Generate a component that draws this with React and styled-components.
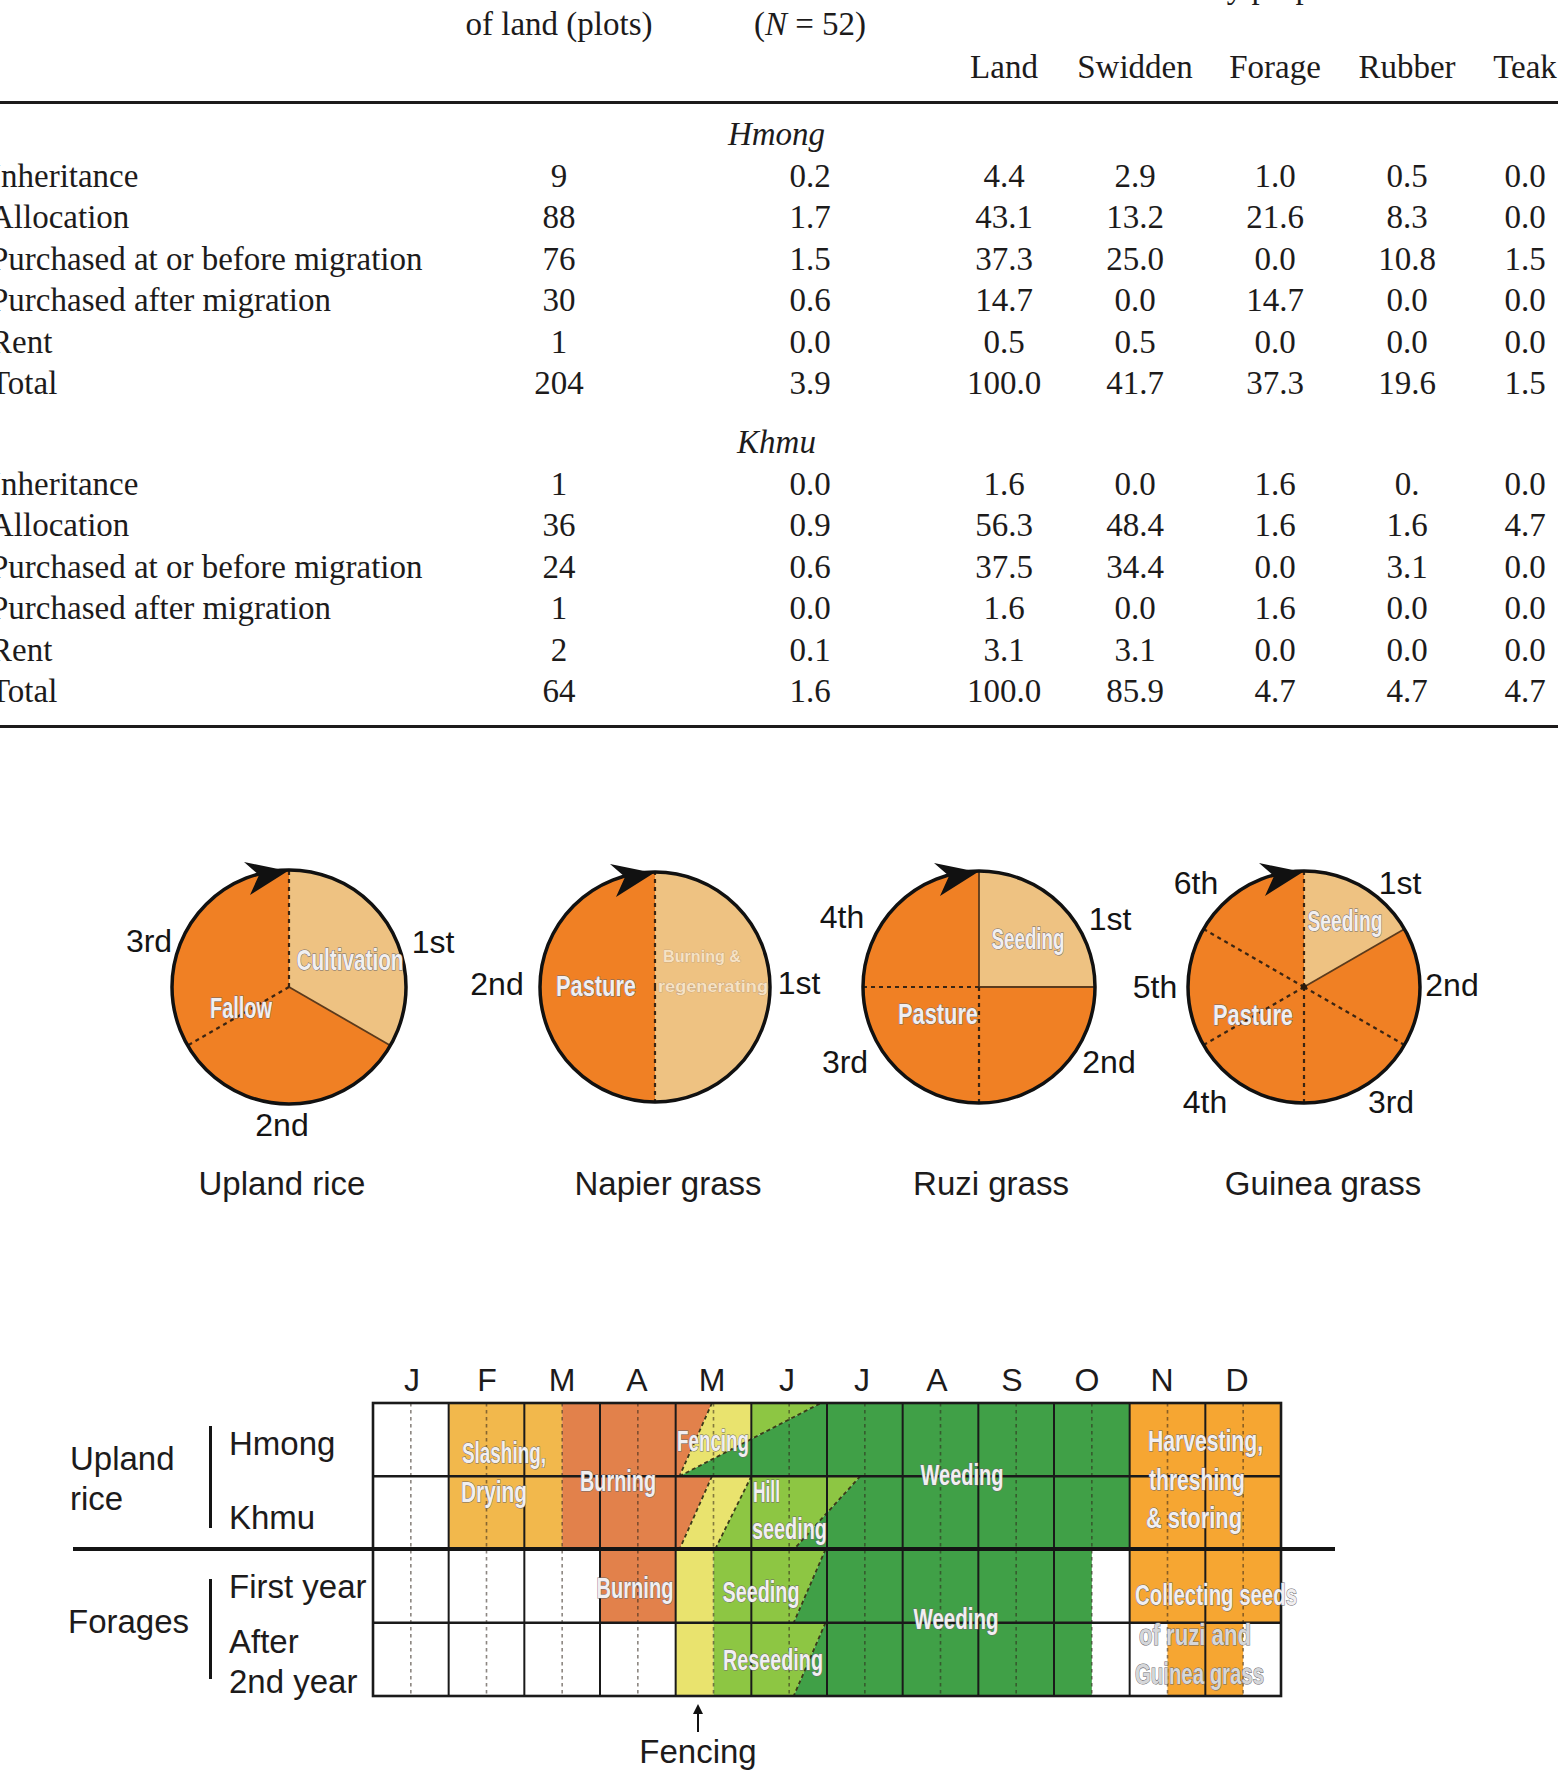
import React from "react";
import styled, { createGlobalStyle } from "styled-components";

const GlobalStyle = createGlobalStyle`
  html, body { margin: 0; padding: 0; background: #ffffff; }
  body { overflow: hidden; }
`;

const Page = styled.div`
  width: 1567px;
  height: 1773px;
  overflow: hidden;
  background: #ffffff;
  color: #1d1b1b;
  display: flex;
  flex-direction: column;
`;

/* ---------------- Table ---------------- */
const COLS = "469px 200px 302px 86px 176px 104px 160px 76px";

const Table = styled.section`
  font-family: "Liberation Serif", "Times New Roman", serif;
  font-size: 33px;
  line-height: 1.15;
  width: 1558px;
  display: flex;
  flex-direction: column;
`;

const ClippedHeading = styled.div`
  height: 41px;
  line-height: 41px;
  margin-top: -33.5px;
  margin-bottom: -4px;
  padding-left: 1071px;
  white-space: nowrap;
`;

const Row = styled.div`
  display: grid;
  grid-template-columns: ${COLS};
  margin-left: -10px;
  margin-top: ${(p) => p.$mt || 0}px;
  height: ${(p) => p.$h}px;
  align-items: center;
  white-space: nowrap;
`;

const Cell = styled.div`
  text-align: center;
`;

const LabelCell = styled.div`
  text-align: left;
`;

const GroupTitle = styled.div`
  grid-column: 1 / -1;
  text-align: center;
  font-style: italic;
`;

const Rule = styled.div`
  height: 3px;
  background: #1d1b1b;
  margin-top: ${(p) => p.$mt}px;
`;

const hmong = [
  ["Inheritance", "9", "0.2", "4.4", "2.9", "1.0", "0.5", "0.0"],
  ["Allocation", "88", "1.7", "43.1", "13.2", "21.6", "8.3", "0.0"],
  ["Purchased at or before migration", "76", "1.5", "37.3", "25.0", "0.0", "10.8", "1.5"],
  ["Purchased after migration", "30", "0.6", "14.7", "0.0", "14.7", "0.0", "0.0"],
  ["Rent", "1", "0.0", "0.5", "0.5", "0.0", "0.0", "0.0"],
  ["Total", "204", "3.9", "100.0", "41.7", "37.3", "19.6", "1.5"],
];

const khmu = [
  ["Inheritance", "1", "0.0", "1.6", "0.0", "1.6", "0.", "0.0"],
  ["Allocation", "36", "0.9", "56.3", "48.4", "1.6", "1.6", "4.7"],
  ["Purchased at or before migration", "24", "0.6", "37.5", "34.4", "0.0", "3.1", "0.0"],
  ["Purchased after migration", "1", "0.0", "1.6", "0.0", "1.6", "0.0", "0.0"],
  ["Rent", "2", "0.1", "3.1", "3.1", "0.0", "0.0", "0.0"],
  ["Total", "64", "1.6", "100.0", "85.9", "4.7", "4.7", "4.7"],
];

const DataRows = ({ rows }) =>
  rows.map((r) => (
    <Row key={r[0]} $h={41.5}>
      <LabelCell>{r[0]}</LabelCell>
      {r.slice(1).map((v, i) => (
        <Cell key={i}>{v}</Cell>
      ))}
    </Row>
  ));

/* ---------------- Pies ---------------- */
const PieRow = styled.section`
  display: flex;
  margin-top: 122px;
  padding-left: 110px;
`;

const PieFigure = styled.figure`
  margin: 0;
  width: ${(p) => p.$w}px;
  display: flex;
  flex-direction: column;
`;

const PieSvg = styled.svg`
  display: block;
  overflow: visible;
`;

const PieCaption = styled.figcaption`
  margin-top: 14px;
  font-family: "Liberation Sans", Arial, sans-serif;
  font-size: 33px;
  line-height: 40px;
  text-align: center;
  white-space: nowrap;
  padding-left: ${(p) => (p.$shift > 0 ? p.$shift * 2 : 0)}px;
  padding-right: ${(p) => (p.$shift < 0 ? -p.$shift * 2 : 0)}px;
`;

const OrdinalText = styled.text`
  font-family: "Liberation Sans", Arial, sans-serif;
  font-size: 32px;
  fill: #141414;
`;

const StageText = styled.text`
  font-family: "Liberation Sans", Arial, sans-serif;
  font-weight: 700;
  font-size: ${(p) => p.$size || 30}px;
  fill: ${(p) => (p.$faint ? "#f6e2c4" : p.$muted ? "#d5d7da" : "#f1eff1")};
  stroke: ${(p) => (p.$faint ? "#b0927a" : "#6b676b")};
  stroke-width: ${(p) => (p.$faint ? 0.6 : 1.1)}px;
  paint-order: stroke;
`;

const ORANGE = "#F08024";
const TAN = "#EEC282";

const polar = (cx, cy, r, deg) => {
  const a = ((deg - 90) * Math.PI) / 180;
  return [cx + r * Math.cos(a), cy + r * Math.sin(a)];
};

const sectorPath = (cx, cy, r, a0, a1) => {
  const [x0, y0] = polar(cx, cy, r, a0);
  const [x1, y1] = polar(cx, cy, r, a1);
  const large = a1 - a0 > 180 ? 1 : 0;
  return `M${cx},${cy} L${x0},${y0} A${r},${r} 0 ${large} 1 ${x1},${y1} Z`;
};

const pies = [
  {
    w: 360, cx: 179, cy: 137, r: 117, tan: [0, 120], dashed: [0, 240], solid: [120],
    caption: "Upland rice", shift: -8,
    labels: [["3rd", 39, 91], ["1st", 323, 92], ["2nd", 172, 275]],
    texts: [
      { t: "Cultivation", x: 240, y: 109, w: 107 },
      { t: "Fallow", x: 131, y: 157, w: 62 },
    ],
  },
  {
    w: 350, cx: 185, cy: 137, r: 115, tan: [0, 180], dashed: [0, 180], solid: [],
    caption: "Napier grass", shift: 23,
    labels: [["2nd", 27, 134], ["1st", 329, 133]],
    texts: [
      { t: "Pasture", x: 126, y: 135, w: 80 },
      { t: "Burning &", x: 232, y: 106, w: 78, size: 17, faint: true },
      { t: "regenerating", x: 243, y: 136, w: 110, size: 17, faint: true },
    ],
  },
  {
    w: 310, cx: 159, cy: 137, r: 116, tan: [0, 90], dashed: [180, 270], solid: [0, 90],
    caption: "Ruzi grass", shift: 16,
    labels: [["4th", 22, 67], ["1st", 290, 69], ["3rd", 25, 212], ["2nd", 289, 212]],
    texts: [
      { t: "Seeding", x: 208, y: 88, w: 73 },
      { t: "Pasture", x: 118, y: 163, w: 80 },
    ],
  },
  {
    w: 360, cx: 174, cy: 137, r: 116, tan: [0, 60], dashed: [0, 120, 180, 240, 300], solid: [60],
    caption: "Guinea grass", shift: 13, dot: true,
    labels: [
      ["6th", 66, 33], ["1st", 270, 33], ["2nd", 322, 135],
      ["3rd", 261, 252], ["4th", 75, 252], ["5th", 25, 137],
    ],
    texts: [
      { t: "Seeding", x: 215, y: 70, w: 75 },
      { t: "Pasture", x: 123, y: 164, w: 80 },
    ],
  },
];

const Pie = ({ p }) => {
  const { cx, cy, r } = p;
  const tx = cx;
  const ty = cy - r;
  const arrow = [
    [tx - 1, ty + 1],
    [tx - 45, ty - 8],
    [tx - 30, ty + 5],
    [tx - 39, ty + 25],
  ]
    .map((q) => q.join(","))
    .join(" ");
  return (
    <PieSvg width={p.w} height={300} viewBox={`0 0 ${p.w} 300`}>
      <circle cx={cx} cy={cy} r={r} fill={ORANGE} />
      <path d={sectorPath(cx, cy, r, p.tan[0], p.tan[1])} fill={TAN} />
      {p.solid.map((a) => {
        const [x, y] = polar(cx, cy, r, a);
        return <line key={"s" + a} x1={cx} y1={cy} x2={x} y2={y} stroke="#5b3a1c" strokeWidth="1.8" />;
      })}
      {p.dashed.map((a) => {
        const [x, y] = polar(cx, cy, r, a);
        return (
          <line key={"d" + a} x1={cx} y1={cy} x2={x} y2={y} stroke="#3a2412" strokeWidth="2.2" strokeDasharray="4 4" />
        );
      })}
      {p.dot && <circle cx={cx} cy={cy} r="3" fill="#2a1a0c" />}
      <circle cx={cx} cy={cy} r={r} fill="none" stroke="#111" strokeWidth="3.5" />
      <polygon points={arrow} fill="#111" />
      {p.texts.map((s) => (
        <StageText
          key={s.t}
          x={s.x}
          y={s.y}
          textAnchor="middle"
          dominantBaseline="central"
          textLength={s.w}
          lengthAdjust="spacingAndGlyphs"
          $size={s.size}
          $faint={s.faint}
        >
          {s.t}
        </StageText>
      ))}
      {p.labels.map(([t, x, y]) => (
        <OrdinalText key={t} x={x} y={y} textAnchor="middle" dominantBaseline="central">
          {t}
        </OrdinalText>
      ))}
    </PieSvg>
  );
};

/* ---------------- Gantt ---------------- */
const CHART_W = 908;
const CHART_H = 293;
const CW = CHART_W / 12;
const RH = CHART_H / 4;

const MonthRow = styled.div`
  display: grid;
  grid-template-columns: repeat(12, 75px);
  margin-top: 155px;
  margin-left: 374.5px;
  height: 44px;
  align-items: center;
  font-family: "Liberation Sans", Arial, sans-serif;
  font-size: 32px;
`;

const Month = styled.div`
  text-align: center;
`;

const GanttBody = styled.div`
  position: relative;
  display: flex;
  margin-left: 62px;
  height: ${CHART_H}px;
`;

const LabelColumn = styled.div`
  width: 311px;
  display: flex;
  flex-direction: column;
  font-family: "Liberation Sans", Arial, sans-serif;
  font-size: 33px;
  line-height: 40px;
`;

const Group = styled.div`
  height: ${RH * 2}px;
  display: flex;
  align-items: center;
`;

const GroupName = styled.div`
  width: ${(p) => 147 - p.$pad}px;
  padding-left: ${(p) => p.$pad}px;
  padding-top: ${(p) => p.$pt || 0}px;
`;

const Bar = styled.div`
  width: 3px;
  height: ${(p) => p.$h}px;
  margin-top: ${(p) => p.$mt}px;
  background: #141414;
`;

const SubLabels = styled.div`
  margin-left: 17px;
  display: flex;
  flex-direction: column;
  align-self: stretch;
  white-space: nowrap;
`;

const SubLabel = styled.div`
  height: ${RH}px;
  box-sizing: border-box;
  padding-top: ${(p) => p.$pt}px;
  display: flex;
  flex-direction: column;
  justify-content: center;
`;

const ChartSvg = styled.svg`
  display: block;
  overflow: visible;
  flex: none;
`;

const Separator = styled.div`
  position: absolute;
  left: 11px;
  top: ${RH * 2 - 2}px;
  width: 1262px;
  height: 4px;
  background: #141414;
`;

const FencingNote = styled.div`
  margin-top: 8px;
  margin-left: 638px;
  width: 120px;
  display: flex;
  flex-direction: column;
  align-items: center;
  font-family: "Liberation Sans", Arial, sans-serif;
  font-size: 33px;
  line-height: 40px;
`;

const COLORS = {
  mustard: "#F2B84C",
  burnt: "#E2814B",
  yellow: "#E9E36E",
  light: "#8DC643",
  dark: "#40A047",
  harvest: "#F6A632",
};

const fills = [
  [0, "mustard", [[1, 0], [2.5, 0], [2.5, 1], [1, 1]]],
  [0, "burnt", [[2.5, 0], [4.48, 0], [4.05, 1], [2.5, 1]]],
  [0, "yellow", [[4.48, 0], [5, 0], [5, 0.49], [4.05, 1]]],
  [0, "light", [[5, 0], [5.92, 0], [5, 0.49]]],
  [0, "dark", [[4.05, 1], [5.92, 0], [10, 0], [10, 1]]],
  [0, "harvest", [[10, 0], [12, 0], [12, 1], [10, 1]]],
  [1, "mustard", [[1, 0], [2.5, 0], [2.5, 1], [1, 1]]],
  [1, "burnt", [[2.5, 0], [4.48, 0], [4.05, 1], [2.5, 1]]],
  [1, "yellow", [[4.48, 0], [5, 0], [4.52, 1], [4.05, 1]]],
  [1, "light", [[5, 0], [6.44, 0], [5.56, 1], [4.52, 1]]],
  [1, "dark", [[6.44, 0], [10, 0], [10, 1], [5.56, 1]]],
  [1, "harvest", [[10, 0], [12, 0], [12, 1], [10, 1]]],
  [2, "burnt", [[3, 0], [4, 0], [4, 1], [3, 1]]],
  [2, "yellow", [[4, 0], [4.5, 0], [4.5, 1], [4, 1]]],
  [2, "light", [[4.5, 0], [5.98, 0], [5.56, 1], [4.5, 1]]],
  [2, "dark", [[5.98, 0], [9.5, 0], [9.5, 1], [5.56, 1]]],
  [2, "harvest", [[10, 0], [12, 0], [12, 1], [10, 1]]],
  [3, "yellow", [[4, 0], [4.5, 0], [4.5, 1], [4, 1]]],
  [3, "light", [[4.5, 0], [5.98, 0], [5.56, 1], [4.5, 1]]],
  [3, "dark", [[5.98, 0], [9.5, 0], [9.5, 1], [5.56, 1]]],
  [3, "harvest", [[10.5, 0], [11.5, 0], [11.5, 1], [10.5, 1]]],
];

const diagonals = [
  [0, [4.48, 0], [4.05, 1]],
  [0, [4.05, 1], [5.92, 0]],
  [1, [4.48, 0], [4.05, 1]],
  [1, [5, 0], [4.52, 1]],
  [1, [6.44, 0], [5.56, 1]],
  [2, [5.98, 0], [5.56, 1]],
  [3, [5.98, 0], [5.56, 1]],
];

const chartTexts = [
  { t: "Slashing,", x: 131, y: 50, w: 84 },
  { t: "Drying", x: 121, y: 89, w: 66 },
  { t: "Burning", x: 245, y: 78, w: 76 },
  { t: "Fencing", x: 340, y: 38, w: 72 },
  { t: "Hill", x: 380, y: 89, w: 27, a: "start" },
  { t: "seeding", x: 379, y: 126, w: 75, a: "start" },
  { t: "Weeding", x: 589, y: 72, w: 83 },
  { t: "Harvesting,", x: 775, y: 38, w: 115, a: "start" },
  { t: "threshing", x: 776, y: 77, w: 96, a: "start" },
  { t: "& storing", x: 773, y: 115, w: 96, a: "start" },
  { t: "Burning", x: 262, y: 185, w: 77 },
  { t: "Seeding", x: 388, y: 189, w: 77 },
  { t: "Weeding", x: 583, y: 216, w: 85 },
  { t: "Reseeding", x: 400, y: 257, w: 100 },
  { t: "Collecting seeds", x: 762, y: 192, w: 162, a: "start" },
  { t: "of ruzi and", x: 766, y: 232, w: 112, a: "start", muted: true },
  { t: "Guinea grass", x: 762, y: 271, w: 129, a: "start", muted: true },
];

const pt = (row, [m, t]) => `${m * CW},${(row + t) * RH}`;

const GanttChart = () => (
  <ChartSvg width={CHART_W} height={CHART_H} viewBox={`0 0 ${CHART_W} ${CHART_H}`}>
    <rect x="0" y="0" width={CHART_W} height={CHART_H} fill="#fff" />
    {fills.map(([row, c, pts], i) => (
      <polygon key={i} points={pts.map((q) => pt(row, q)).join(" ")} fill={COLORS[c]} />
    ))}
    {Array.from({ length: 12 }, (_, m) => (
      <line
        key={"mid" + m}
        x1={(m + 0.5) * CW}
        y1={0}
        x2={(m + 0.5) * CW}
        y2={CHART_H}
        stroke="rgba(45,35,25,0.55)"
        strokeWidth="1.6"
        strokeDasharray="3.5 3.5"
      />
    ))}
    {diagonals.map(([row, a, b], i) => {
      const [x1, y1] = pt(row, a).split(",");
      const [x2, y2] = pt(row, b).split(",");
      return (
        <line key={"dg" + i} x1={x1} y1={y1} x2={x2} y2={y2} stroke="#3b3a1a" strokeWidth="1.8" strokeDasharray="4 3" />
      );
    })}
    {Array.from({ length: 11 }, (_, i) => (
      <line key={"v" + i} x1={(i + 1) * CW} y1={0} x2={(i + 1) * CW} y2={CHART_H} stroke="#1a1a1a" strokeWidth="2" />
    ))}
    {[1, 3].map((r) => (
      <line key={"h" + r} x1={0} y1={r * RH} x2={CHART_W} y2={r * RH} stroke="#1a1a1a" strokeWidth="2.4" />
    ))}
    <rect x="0" y="0" width={CHART_W} height={CHART_H} fill="none" stroke="#1a1a1a" strokeWidth="2.6" />
    {chartTexts.map((s, i) => (
      <StageText
        key={i}
        x={s.x}
        y={s.y}
        textAnchor={s.a || "middle"}
        dominantBaseline="central"
        textLength={s.w}
        lengthAdjust="spacingAndGlyphs"
        $size={29}
        $muted={s.muted}
      >
        {s.t}
      </StageText>
    ))}
  </ChartSvg>
);

const UpArrow = () => (
  <svg width="16" height="28" viewBox="0 0 16 28">
    <line x1="8" y1="7" x2="8" y2="28" stroke="#111" strokeWidth="2" />
    <polygon points="8,0 3,10 13,10" fill="#111" />
  </svg>
);

const months = ["J", "F", "M", "A", "M", "J", "J", "A", "S", "O", "N", "D"];

export default function App() {
  return (
    <>
      <GlobalStyle />
      <Page>
        <Table>
          <ClippedHeading>Land area by purpose</ClippedHeading>
          <Row $h={43}>
            <LabelCell />
            <Cell>of land (plots)</Cell>
            <Cell>
              (<i>N</i> = 52)
            </Cell>
          </Row>
          <Row $h={43}>
            <LabelCell />
            <Cell />
            <Cell />
            <Cell>Land</Cell>
            <Cell>Swidden</Cell>
            <Cell>Forage</Cell>
            <Cell>Rubber</Cell>
            <Cell>Teak</Cell>
          </Row>
          <Rule $mt={11.5} />
          <Row $h={43} $mt={9}>
            <GroupTitle>Hmong</GroupTitle>
          </Row>
          <DataRows rows={hmong} />
          <Row $h={43} $mt={16}>
            <GroupTitle>Khmu</GroupTitle>
          </Row>
          <DataRows rows={khmu} />
          <Rule $mt={11.5} />
        </Table>

        <PieRow>
          {pies.map((p) => (
            <PieFigure key={p.caption} $w={p.w}>
              <Pie p={p} />
              <PieCaption $shift={p.shift}>{p.caption}</PieCaption>
            </PieFigure>
          ))}
        </PieRow>

        <MonthRow>
          {months.map((m, i) => (
            <Month key={i}>{m}</Month>
          ))}
        </MonthRow>
        <GanttBody>
          <LabelColumn>
            <Group>
              <GroupName $pad={8} $pt={6}>
                Upland
                <br />
                rice
              </GroupName>
              <Bar $h={102} $mt={3} />
              <SubLabels>
                <SubLabel $pt={10}>Hmong</SubLabel>
                <SubLabel $pt={12}>Khmu</SubLabel>
              </SubLabels>
            </Group>
            <Group>
              <GroupName $pad={6}>Forages</GroupName>
              <Bar $h={100} $mt={13} />
              <SubLabels>
                <SubLabel $pt={2}>First year</SubLabel>
                <SubLabel $pt={6}>
                  <span>After</span>
                  <span>2nd year</span>
                </SubLabel>
              </SubLabels>
            </Group>
          </LabelColumn>
          <GanttChart />
          <Separator />
        </GanttBody>
        <FencingNote>
          <UpArrow />
          <span>Fencing</span>
        </FencingNote>
      </Page>
    </>
  );
}
